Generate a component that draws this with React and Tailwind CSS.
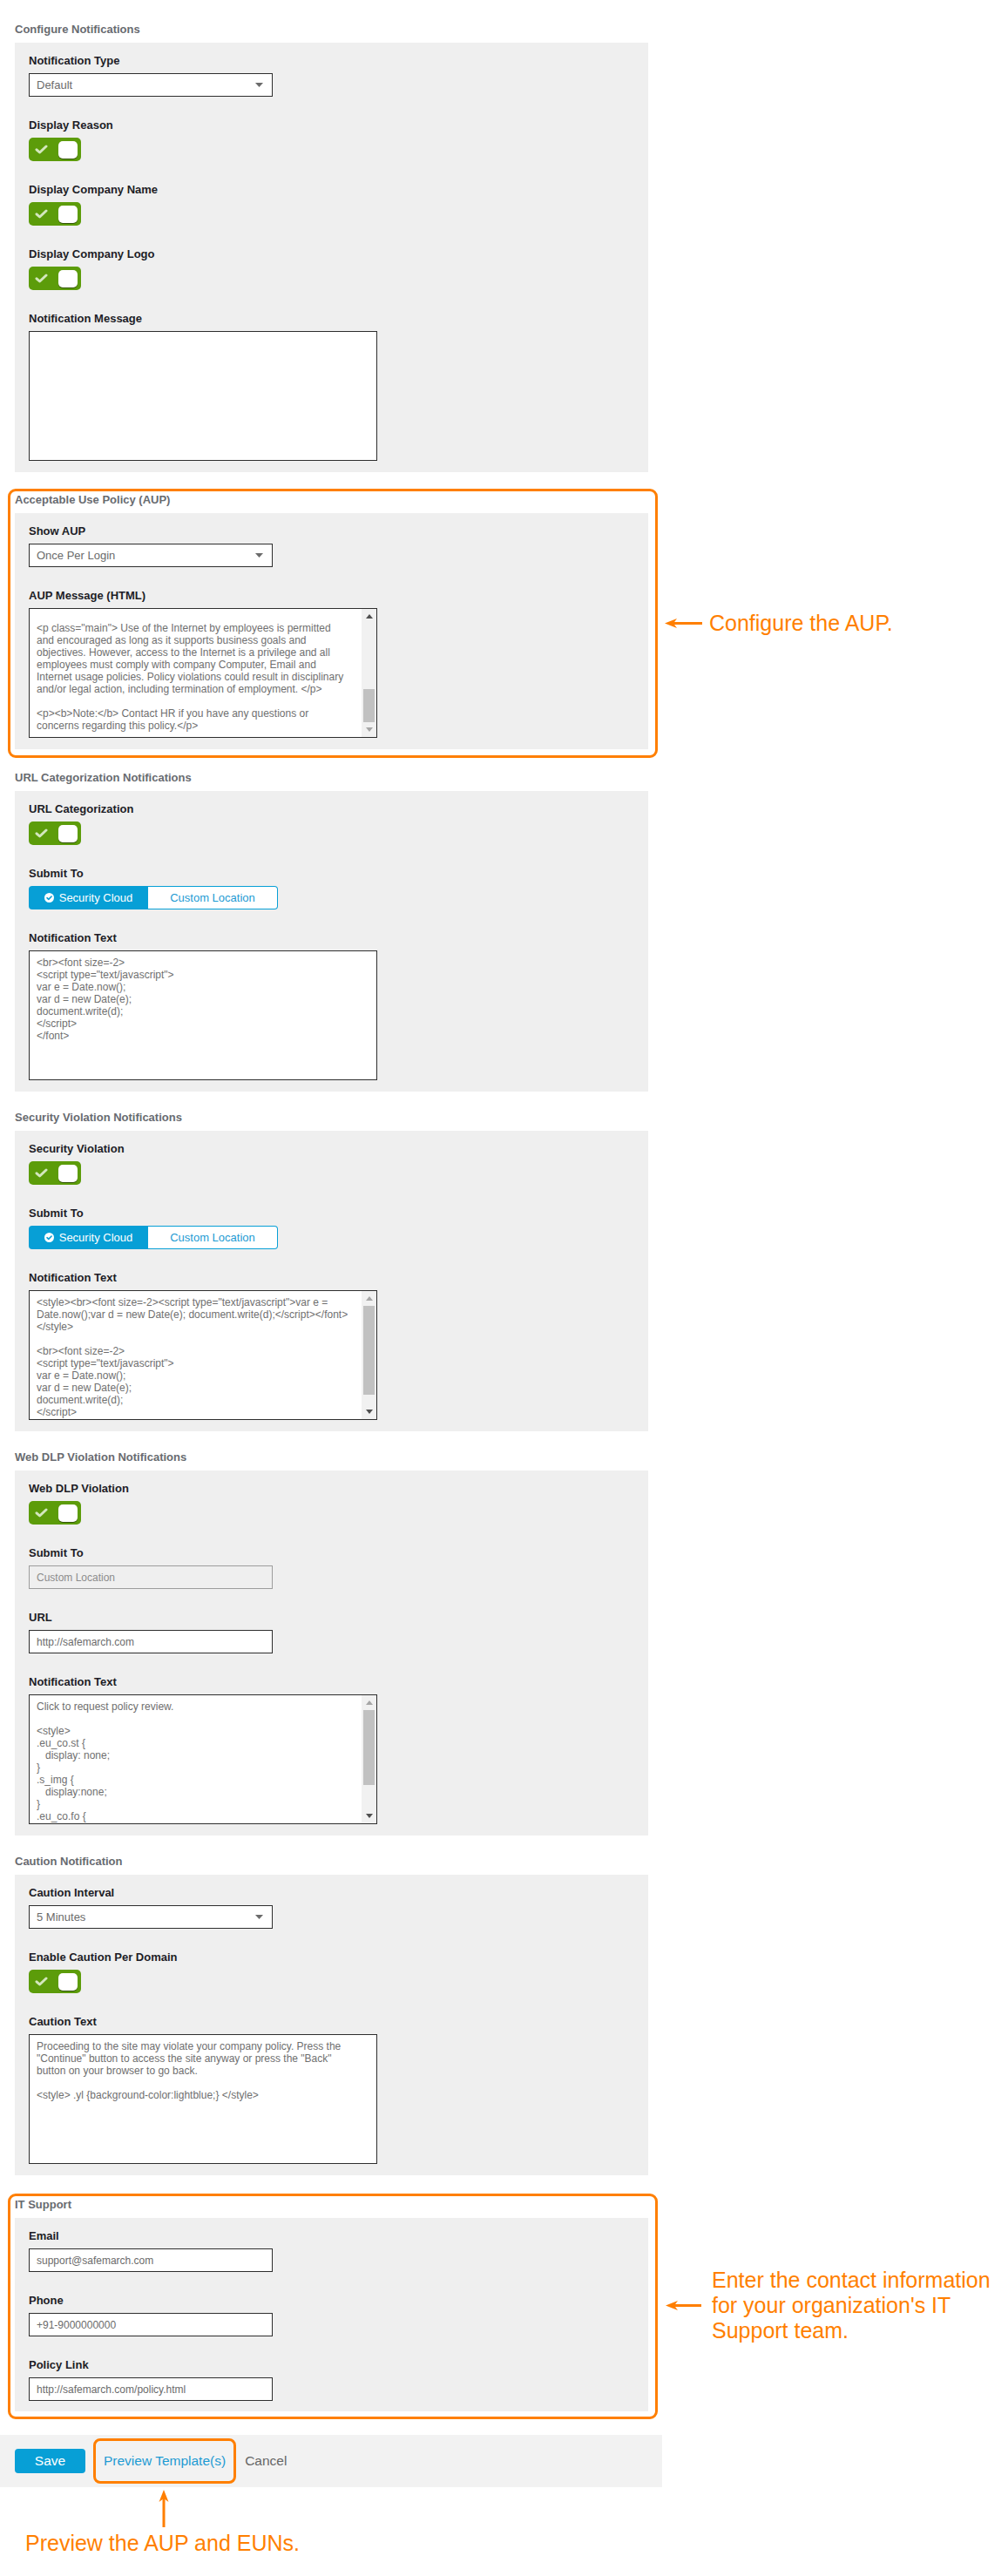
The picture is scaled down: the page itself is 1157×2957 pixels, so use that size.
import React from 'react'

const Label = ({ children }) => (
  <div className="mb-[6px] text-[13px] font-bold leading-4 text-[#1d1d26]">{children}</div>
)

const Field = ({ label, last, children }) => (
  <div className={last ? '' : 'mb-[25px]'}>
    <Label>{label}</Label>
    {children}
  </div>
)

const Toggle = () => (
  <div className="flex h-[27px] w-[60px] items-center justify-between rounded-[5px] bg-[#5c9c0a] pl-[7px] pr-[4px]">
    <svg width="15" height="11" viewBox="0 0 15 11">
      <path d="M2 5.8l3.6 3.2L13 2" fill="none" stroke="#d3e7bd" strokeWidth="3" strokeLinecap="round" strokeLinejoin="round" />
    </svg>
    <div className="h-[20px] w-[22px] rounded-[5px] bg-white shadow-[0_1px_0_rgba(0,0,0,0.45)]" />
  </div>
)

const Select = ({ value }) => (
  <div className="flex h-[27px] w-[280px] items-center justify-between border border-[#2e2e2e] bg-white pl-[8px] pr-[10px] text-[13px] text-[#6b6b6b]">
    <span>{value}</span>
    <svg width="9" height="5" viewBox="0 0 9 5">
      <path d="M0 0h9L4.5 5z" fill="#6b6b6b" />
    </svg>
  </div>
)

const Input = ({ value, disabled }) => (
  <div
    className={
      disabled
        ? 'flex h-[27px] w-[280px] items-center border border-[#9d9d9d] pl-[8px] text-[12px] text-[#8c8c8c]'
        : 'flex h-[27px] w-[280px] items-center border border-[#2e2e2e] bg-white pl-[8px] text-[12px] text-[#6b6b6b]'
    }
  >
    {value}
  </div>
)

const Segmented = () => (
  <div className="flex h-[27px] w-[286px] text-[13px]">
    <div className="flex w-[137px] items-center justify-center gap-[6px] rounded-l-[4px] bg-[#079fd6] text-white">
      <svg width="11" height="11" viewBox="0 0 11 11">
        <circle cx="5.5" cy="5.5" r="5.5" fill="#fff" />
        <path d="M3 5.7l1.8 1.7L8.1 4" fill="none" stroke="#079fd6" strokeWidth="1.6" strokeLinecap="round" strokeLinejoin="round" />
      </svg>
      <span>Security Cloud</span>
    </div>
    <div className="flex flex-1 items-center justify-center rounded-r-[4px] border border-l-0 border-[#079fd6] bg-white text-[#1e9bd3]">
      Custom Location
    </div>
  </div>
)

const Tri = ({ up, color }) => (
  <svg width="8" height="5" viewBox="0 0 8 5">
    <path d={up ? 'M4 0L8 5H0z' : 'M0 0h8L4 5z'} fill={color} />
  </svg>
)

const Scrollbar = ({ thumb, atBottom }) => (
  <div className="flex h-full w-[17px] flex-col bg-[#f1f1f1]">
    <div className="flex h-[17px] items-center justify-center">
      <Tri up color={atBottom ? '#505050' : '#a6a6a6'} />
    </div>
    <div className={atBottom ? 'flex flex-1 flex-col justify-end px-[2px]' : 'flex flex-1 flex-col px-[2px]'}>
      <div className={thumb + ' bg-[#c1c1c1]'} />
    </div>
    <div className="flex h-[17px] items-center justify-center">
      <Tri color={atBottom ? '#a6a6a6' : '#505050'} />
    </div>
  </div>
)

const TextBox = ({ lines, top, thumb, atBottom }) => (
  <div className="flex h-[149px] w-[400px] overflow-hidden border border-[#2e2e2e] bg-white">
    <div className={'flex-1 overflow-hidden whitespace-pre pl-[8px] text-[12px] leading-[14px] text-[#6f6f6f] ' + (top || 'pt-[6px]')}>
      {lines.map((l, i) => (
        <div key={i} className="h-[14px]">{l}</div>
      ))}
    </div>
    {thumb && <Scrollbar thumb={thumb} atBottom={atBottom} />}
  </div>
)

const Panel = ({ children, pb }) => (
  <div className={'bg-[#efefef] pl-[16px] pt-[13px] ' + (pb || 'pb-[13px]')}>{children}</div>
)

const Title = ({ children }) => (
  <div className="mb-[7px] text-[13px] font-bold leading-4 text-[#686b70]">{children}</div>
)

const Section = ({ title, mt, children }) => (
  <div className={'ml-[17px] w-[727px] ' + (mt || '')}>
    <Title>{title}</Title>
    <Panel>{children}</Panel>
  </div>
)

const ArrowLeft = ({ w }) => (
  <svg width={w} height="12" viewBox={`0 0 ${w} 12`}>
    <path d={`M10 6H${w}`} stroke="#ff7f00" strokeWidth="3" />
    <path d="M0 6L14 0.5L10 6L14 11.5z" fill="#ff7f00" />
  </svg>
)

const aupLines = [
  '<p class="main"> Use of the Internet by employees is permitted',
  'and encouraged as long as it supports business goals and',
  'objectives. However, access to the Internet is a privilege and all',
  'employees must comply with company Computer, Email and',
  'Internet usage policies. Policy violations could result in disciplinary',
  'and/or legal action, including termination of employment. </p>',
  '',
  '<p><b>Note:</b> Contact HR if you have any questions or',
  'concerns regarding this policy.</p>',
]

const urlLines = [
  '<br><font size=-2>',
  '<script type="text/javascript">',
  'var e = Date.now();',
  'var d = new Date(e);',
  'document.write(d);',
  '</script>',
  '</font>',
]

const secLines = [
  '<style><br><font size=-2><script type="text/javascript">var e =',
  'Date.now();var d = new Date(e); document.write(d);</script></font>',
  '</style>',
  '',
  '<br><font size=-2>',
  '<script type="text/javascript">',
  'var e = Date.now();',
  'var d = new Date(e);',
  'document.write(d);',
  '</script>',
]

const dlpLines = [
  'Click to request policy review.',
  '',
  '<style>',
  '.eu_co.st {',
  '   display: none;',
  '}',
  '.s_img {',
  '   display:none;',
  '}',
  '.eu_co.fo {',
]

const cautionLines = [
  'Proceeding to the site may violate your company policy. Press the',
  '"Continue" button to access the site anyway or press the "Back"',
  'button on your browser to go back.',
  '',
  '<style> .yl {background-color:lightblue;} </style>',
]

export default function App() {
  return (
    <div className="min-h-[2957px] w-[1157px] bg-white pt-[26px] font-['Liberation_Sans',Arial,sans-serif]">
      <Section title="Configure Notifications">
        <Field label="Notification Type">
          <Select value="Default" />
        </Field>
        <Field label="Display Reason">
          <Toggle />
        </Field>
        <Field label="Display Company Name">
          <Toggle />
        </Field>
        <Field label="Display Company Logo">
          <Toggle />
        </Field>
        <Field label="Notification Message" last>
          <TextBox lines={[]} />
        </Field>
      </Section>

      <div className="relative ml-[9px] mt-[19px] w-[746px] rounded-[9px] border-[3px] border-[#ff7f00] pb-[7px] pl-[5px] pr-[8px] pt-[2px]">
        <Title>Acceptable Use Policy (AUP)</Title>
        <Panel>
          <Field label="Show AUP">
            <Select value="Once Per Login" />
          </Field>
          <Field label="AUP Message (HTML)" last>
            <TextBox lines={aupLines} top="pt-[15px]" thumb="h-[38px]" atBottom />
          </Field>
        </Panel>
        <div className="absolute left-[751px] top-[151px] flex -translate-y-1/2 items-center gap-[8px]">
          <ArrowLeft w={43} />
          <span className="whitespace-nowrap text-[25px] leading-[29px] text-[#ff7f00]">Configure the AUP.</span>
        </div>
      </div>

      <Section title="URL Categorization Notifications" mt="mt-[15px]">
        <Field label="URL Categorization">
          <Toggle />
        </Field>
        <Field label="Submit To">
          <Segmented />
        </Field>
        <Field label="Notification Text" last>
          <TextBox lines={urlLines} />
        </Field>
      </Section>

      <Section title="Security Violation Notifications" mt="mt-[22px]">
        <Field label="Security Violation">
          <Toggle />
        </Field>
        <Field label="Submit To">
          <Segmented />
        </Field>
        <Field label="Notification Text" last>
          <TextBox lines={secLines} thumb="h-[102px]" />
        </Field>
      </Section>

      <Section title="Web DLP Violation Notifications" mt="mt-[22px]">
        <Field label="Web DLP Violation">
          <Toggle />
        </Field>
        <Field label="Submit To">
          <Input value="Custom Location" disabled />
        </Field>
        <Field label="URL">
          <Input value="http://safemarch.com" />
        </Field>
        <Field label="Notification Text" last>
          <TextBox lines={dlpLines} thumb="h-[86px]" />
        </Field>
      </Section>

      <Section title="Caution Notification" mt="mt-[22px]">
        <Field label="Caution Interval">
          <Select value="5 Minutes" />
        </Field>
        <Field label="Enable Caution Per Domain">
          <Toggle />
        </Field>
        <Field label="Caution Text" last>
          <TextBox lines={cautionLines} />
        </Field>
      </Section>

      <div className="relative ml-[9px] mt-[21px] w-[746px] rounded-[9px] border-[3px] border-[#ff7f00] pb-[6px] pl-[5px] pr-[8px] pt-[2px]">
        <Title>IT Support</Title>
        <Panel pb="pb-[12px]">
          <Field label="Email">
            <Input value="support@safemarch.com" />
          </Field>
          <Field label="Phone">
            <Input value="+91-9000000000" />
          </Field>
          <Field label="Policy Link" last>
            <Input value="http://safemarch.com/policy.html" />
          </Field>
        </Panel>
        <div className="absolute left-[752px] top-[125px] flex -translate-y-1/2 items-center gap-[12px]">
          <ArrowLeft w={41} />
          <div className="whitespace-nowrap text-[25px] leading-[29px] text-[#ff7f00]">
            Enter the contact information
            <br />
            for your organization's IT
            <br />
            Support team.
          </div>
        </div>
      </div>

      <div className="mt-[18px] flex h-[60px] w-[760px] items-center bg-[#f2f2f2] pl-[17px]">
        <button className="h-[28px] w-[81px] rounded-[4px] bg-[#079fd6] text-[15.5px] text-white">Save</button>
        <div className="ml-[9px] flex h-[52px] items-center rounded-[8px] border-[3px] border-[#ff7f00] px-[9px] text-[15.5px] text-[#1e9bd3]">
          Preview Template(s)
        </div>
        <span className="ml-[10px] text-[15.5px] text-[#666]">Cancel</span>
      </div>

      <div className="ml-[182px] mt-[3px] w-[12px]">
        <svg width="12" height="43" viewBox="0 0 12 43">
          <path d="M6 10V43" stroke="#ff7f00" strokeWidth="3" />
          <path d="M6 0L11.5 14L6 10L0.5 14z" fill="#ff7f00" />
        </svg>
      </div>
      <div className="ml-[29px] mt-[4px] text-[25px] leading-[29px] text-[#ff7f00]">Preview the AUP and EUNs.</div>
    </div>
  )
}
